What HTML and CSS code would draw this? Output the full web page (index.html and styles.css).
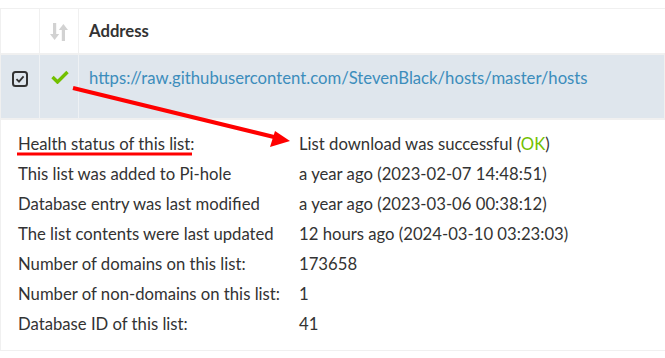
FILE: index.html
```html
<!DOCTYPE html>
<html>
<head>
<meta charset="utf-8">
<link rel="stylesheet" href="styles.css">
</head>
<body>
<div class="page">
  <div class="table">
    <div class="row head">
      <div class="cell c1"></div>
      <div class="cell c2">
        <svg class="sort" width="18" height="20" viewBox="0 0 18 20">
          <rect x="3" y="1" width="3.2" height="12" fill="#d2d2d2"/>
          <polygon points="0,12 9.2,12 4.6,18" fill="#d2d2d2"/>
          <rect x="11.8" y="7" width="3.2" height="12" fill="#d2d2d2"/>
          <polygon points="8.8,8 18,8 13.4,2" fill="#d2d2d2"/>
        </svg>
      </div>
      <div class="cell c3 th">Address</div>
    </div>
    <div class="row data">
      <div class="cell c1">
        <svg width="16" height="16" viewBox="0 0 16 16">
          <rect x="1" y="1" width="14" height="14" rx="2.5" fill="none" stroke="#333" stroke-width="2"/>
          <path d="M4.5 8.2 L7 10.6 L11.6 5.4" fill="none" stroke="#333" stroke-width="1.8"/>
        </svg>
      </div>
      <div class="cell c2">
        <svg width="18" height="14" viewBox="0 0 18 14">
          <path d="M1.5 7 L6.5 12 L16.5 2" fill="none" stroke="#73c000" stroke-width="3.4"/>
        </svg>
      </div>
      <div class="cell c3"><a class="link">https://raw.githubusercontent.com/StevenBlack/hosts/master/hosts</a></div>
    </div>
    <div class="details">
      <div class="drow"><span class="lbl">Health status of this list:</span><span class="val">List download was successful (<span class="ok">OK</span>)</span></div>
      <div class="drow"><span class="lbl">This list was added to Pi-hole</span><span class="val">a year ago (2023-02-07 14:48:51)</span></div>
      <div class="drow"><span class="lbl">Database entry was last modified</span><span class="val">a year ago (2023-03-06 00:38:12)</span></div>
      <div class="drow"><span class="lbl">The list contents were last updated</span><span class="val">12 hours ago (2024-03-10 03:23:03)</span></div>
      <div class="drow"><span class="lbl">Number of domains on this list:</span><span class="val">173658</span></div>
      <div class="drow"><span class="lbl">Number of non-domains on this list:</span><span class="val">1</span></div>
      <div class="drow"><span class="lbl">Database ID of this list:</span><span class="val">41</span></div>
    </div>
  </div>
  <svg class="annot" width="665" height="358" viewBox="0 0 665 358">
    <line x1="73" y1="88" x2="274" y2="137" stroke="#f00" stroke-width="4"/>
    <polygon points="290,141 270,147 275,131" fill="#f00"/>
    <line x1="17" y1="154" x2="192" y2="154" stroke="#f00" stroke-width="3"/>
  </svg>
</div>
</body>
</html>
```
FILE: styles.css
```css
html, body { margin: 0; padding: 0; background: #fff; }
.page {
  position: relative;
  width: 665px;
  height: 358px;
  padding-top: 8px;
  box-sizing: border-box;
  font-family: "Lato", "Noto Sans", sans-serif;
  font-size: 16.7px;
  color: #333;
}
.table {
  border-top: 1px solid #f0f0f0;
  border-left: 1px solid #f0f0f0;
  border-bottom: 1px solid #f0f0f0;
}
.row { display: flex; }
.cell { display: flex; align-items: center; box-sizing: border-box; }
.c1 { width: 39px; justify-content: center; border-right: 1px solid #f0f0f0; }
.c2 { width: 39px; justify-content: center; border-right: 1px solid #f0f0f0; }
.c3 { flex: 1; padding-left: 10px; }
.head { height: 44px; border-bottom: 2px solid #f0f0f0; }
.head .c2 { padding-top: 2px; }
.th { font-weight: bold; color: #333; }
.data {
  height: 63px;
  background: #dfe6ed;
  border-bottom: 2px solid #f0f0f0;
  border-right: 1px solid #f0f0f0;
}
.data .cell { align-items: flex-start; padding-top: 13px; }
.data .c1, .data .c2 { border-right-color: #eef1f4; }
.data .c1 { padding-top: 16px; }
.data .c2 { padding-top: 15px; padding-left: 2px; }
.link { color: #3c8dbc; text-decoration: none; }
.details { padding: 9px 0 11px 17px; }
.drow { display: flex; height: 30px; align-items: center; }
.lbl { width: 281px; flex: none; }
.ok { color: #73c000; }
.annot { position: absolute; left: 0; top: 0; pointer-events: none; }
```
